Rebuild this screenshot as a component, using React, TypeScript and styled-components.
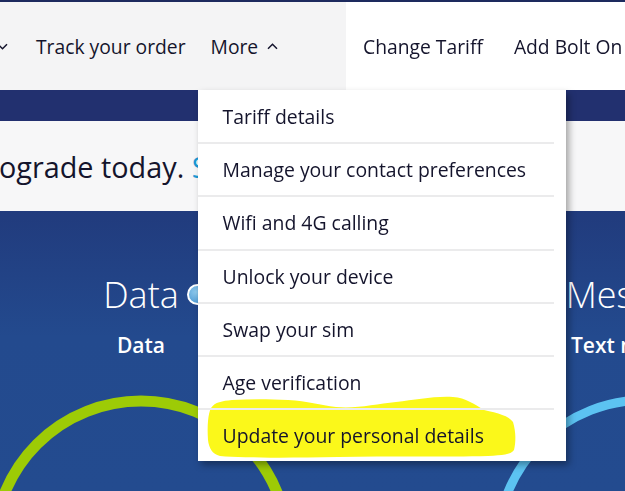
import React from 'react';
import styled, { createGlobalStyle } from 'styled-components';

const GlobalStyle = createGlobalStyle`
  html, body { margin: 0; padding: 0; background: #ffffff; }
  body {
    font-family: "Open Sans", "Noto Sans", sans-serif;
    color: #14142c;
    overflow: hidden;
  }
  * { box-sizing: border-box; }
`;

const Page = styled.div`
  width: 625px;
  height: 491px;
  overflow: hidden;
  display: flex;
  flex-direction: column;
`;

const TopRule = styled.div`
  flex: none;
  height: 2px;
  background: #1d2a5e;
`;

const NavBar = styled.nav`
  flex: none;
  height: 88px;
  display: flex;
  align-items: stretch;
  background: #ffffff;
  position: relative;
  z-index: 5;
`;

const NavGroup = styled.div<{ $shaded?: boolean }>`
  flex: none;
  display: flex;
  align-items: stretch;
  gap: ${(p) => (p.$shaded ? '25px' : '31px')};
  width: ${(p) => (p.$shaded ? '346px' : 'auto')};
  padding-left: ${(p) => (p.$shaded ? '0' : '17px')};
  background: ${(p) => (p.$shaded ? '#f4f4f5' : 'transparent')};
`;

const NavItem = styled.div<{ $shift?: number; $after?: number }>`
  position: relative;
  display: flex;
  align-items: center;
  gap: 9px;
  margin-left: ${(p) => p.$shift ?? 0}px;
  margin-right: ${(p) => p.$after ?? 0}px;
  font-size: 19.3px;
  white-space: nowrap;
  color: #14142c;
`;

const Chevron = styled.svg`
  display: block;
  flex: none;
`;

const Menu = styled.div`
  position: absolute;
  top: 100%;
  left: -13px;
  width: 368px;
  padding-top: 1px;
  background: #ffffff;
  box-shadow: 3px 4px 7px rgba(0, 0, 0, 0.35);
`;

const MenuItem = styled.div<{ $last?: boolean }>`
  position: relative;
  z-index: 1;
  height: ${(p) => (p.$last ? '50.5px' : '53.2px')};
  margin-right: 12px;
  padding-left: 25px;
  display: flex;
  align-items: center;
  font-size: 19.4px;
  color: #14142c;
  border-bottom: ${(p) => (p.$last ? 'none' : '2px solid #ebebec')};
`;

const Highlight = styled.svg`
  position: absolute;
  left: 0;
  top: 0;
  z-index: 0;
  mix-blend-mode: multiply;
  pointer-events: none;
`;

const NavyStrip = styled.div`
  flex: none;
  height: 31px;
  background: #22306f;
`;

const PromoBand = styled.div`
  flex: none;
  height: 90px;
  background: #f7f7f8;
  display: flex;
  align-items: center;
  white-space: nowrap;
  font-size: 28.8px;
  color: #14142c;
`;

const PromoText = styled.span`
  margin-left: -1px;
`;

const PromoLink = styled.span`
  color: #1b9ad6;
`;

const Showcase = styled.section`
  flex: 1;
  display: flex;
  padding-left: 15px;
  background: linear-gradient(180deg, #213b7d 0%, #234a8e 45%, #234b8f 100%);
  overflow: hidden;
`;

const Column = styled.div`
  flex: none;
  width: 252px;
  display: flex;
  flex-direction: column;
  align-items: center;
  padding-top: 62px;
`;

const Heading = styled.h2`
  position: relative;
  margin: 0;
  font-size: 36px;
  line-height: 43px;
  font-weight: 300;
  color: #ffffff;
  white-space: nowrap;
`;

const InfoDot = styled.span`
  position: absolute;
  left: calc(100% + 8px);
  top: 11px;
  width: 21px;
  height: 21px;
  border-radius: 50%;
  border: 2px solid #ffffff;
  background: radial-gradient(circle at 40% 35%, #8ec9ec, #3f8fcf);
`;

const SubHeading = styled.div`
  margin-top: 15px;
  font-size: 21px;
  line-height: 28px;
  font-weight: 600;
  color: #ffffff;
  white-space: nowrap;
`;

const Ring = styled.svg`
  flex: none;
  display: block;
  margin-top: 29px;
`;

const menuItems = [
  'Tariff details',
  'Manage your contact preferences',
  'Wifi and 4G calling',
  'Unlock your device',
  'Swap your sim',
  'Age verification',
  'Update your personal details',
];

const ChevronDown = () => (
  <Chevron width="11" height="7" viewBox="0 0 11 7">
    <path d="M1 1.2 L5.5 5.7 L10 1.2" fill="none" stroke="#14142c" strokeWidth="1.5" />
  </Chevron>
);

const ChevronUp = () => (
  <Chevron width="11" height="7" viewBox="0 0 11 7">
    <path d="M1 5.8 L5.5 1.3 L10 5.8" fill="none" stroke="#14142c" strokeWidth="1.5" />
  </Chevron>
);

const columns = [
  { title: 'Data', sub: 'Data', color: '#9dcb06', width: 11, info: true },
  { title: 'Minutes', sub: 'Calls', color: '', width: 0, info: true },
  { title: 'Messages', sub: 'Text messages', color: '#5cc3f2', width: 9, info: false },
];

export default function App() {
  return (
    <>
      <GlobalStyle />
      <Page>
        <TopRule />
        <NavBar>
          <NavGroup $shaded>
            <NavItem $shift={-3} $after={3}>
              <ChevronDown />
            </NavItem>
            <NavItem>Track your order</NavItem>
            <NavItem>
              More
              <ChevronUp />
              <Menu>
                <Highlight width="368" height="372" viewBox="0 0 368 372">
                  <path
                    d="M10 350 C9 336 10 324 13 318 C17 312 24 311 34 310 C52 309 70 309 90 310 C110 311 122 315 138 317 C158 319 178 314 198 312 C218 310 235 306 255 307 C268 308 276 314 286 320 C300 323 311 326 315 332 C318 342 318 352 316 360 C312 365 305 365 290 366 C250 367 190 366 140 367 C90 368 45 368 22 366 C14 364 11 358 10 350 Z"
                    fill="#fbf81a"
                  />
                </Highlight>
                {menuItems.map((label, i) => (
                  <MenuItem key={label} $last={i === menuItems.length - 1}>
                    {label}
                  </MenuItem>
                ))}
              </Menu>
            </NavItem>
          </NavGroup>
          <NavGroup>
            <NavItem>Change Tariff</NavItem>
            <NavItem>Add Bolt On</NavItem>
          </NavGroup>
        </NavBar>
        <NavyStrip />
        <PromoBand>
          <PromoText>
            ograde today. <PromoLink>See your upgrade options</PromoLink>
          </PromoText>
        </PromoBand>
        <Showcase>
          {columns.map((c) => (
            <Column key={c.title}>
              <Heading>
                {c.title}
                {c.info && <InfoDot />}
              </Heading>
              <SubHeading>{c.sub}</SubHeading>
              {c.color && (
                <Ring width="320" height="320" viewBox="0 0 320 320">
                  <circle
                    cx="160"
                    cy="160"
                    r={152.5 - c.width / 2}
                    fill="none"
                    stroke={c.color}
                    strokeWidth={c.width}
                  />
                </Ring>
              )}
            </Column>
          ))}
        </Showcase>
      </Page>
    </>
  );
}
